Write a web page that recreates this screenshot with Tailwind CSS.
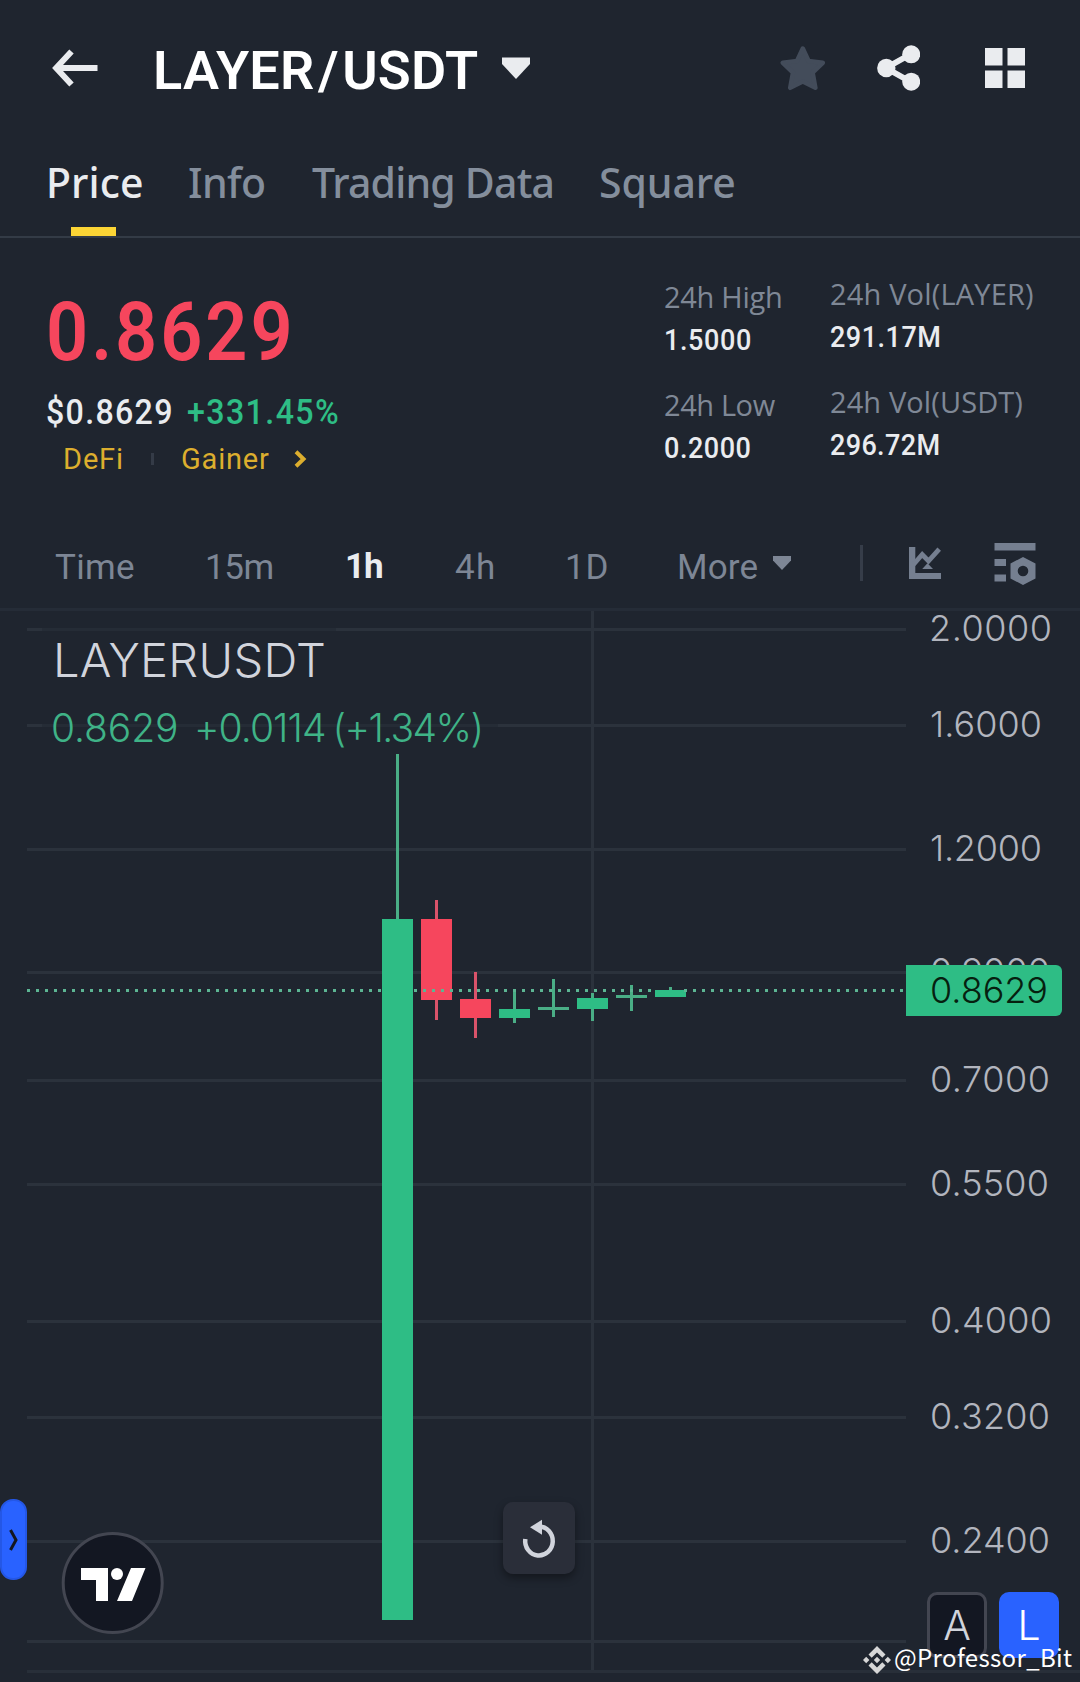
<!DOCTYPE html>
<html lang="en">
<head>
<meta charset="utf-8">
<title>LAYER/USDT</title>
<script src="https://cdn.jsdelivr.net/npm/@tailwindcss/browser@4"></script>
</head>
<body class="bg-[#1f252f]">
<div class="w-[1080px] h-[1682px] overflow-hidden bg-[#1f252f] font-['Roboto',sans-serif] whitespace-nowrap flex flex-col">

  <!-- Top bar -->
  <header class="h-[136px] shrink-0 flex items-center pl-[52px] text-[#eaecef]">
    <svg class="w-[46px] h-[38px] shrink-0" viewBox="0 0 46 38" fill="none" stroke="currentColor" stroke-width="6"><path d="M4 19H45.5M19.5 2.5L4.2 19L19.5 35.5"/></svg>
    <h1 class="ml-[55px] w-[349px] text-[54px] leading-[60px] pt-[5px] font-semibold tracking-[0.2px] text-white">LAYER<span class="mx-[3.5px]">/</span>USDT</h1>
    <svg class="w-[28px] h-[22px] shrink-0" viewBox="0 0 28 22" fill="currentColor"><path d="M0 0.5H28V7L14 22L0 7Z"/></svg>
    <svg class="ml-[250px] w-[46px] h-[46px] shrink-0 text-[#434c5a]" viewBox="0 0 46 46" fill="currentColor" stroke="currentColor" stroke-width="4.5" stroke-linejoin="round"><path d="M22.8 3.5L28.6 16L42.8 17.8L32.6 27.5L35.4 42.8L22.8 36.5L10.2 42.8L13 27.5L2.8 17.8L17 16Z"/></svg>
    <svg class="ml-[51px] w-[43px] h-[46px] shrink-0" viewBox="0 0 43 46" fill="currentColor"><path d="M34 9L9 23L34 37" fill="none" stroke="currentColor" stroke-width="6"/><circle cx="9.3" cy="23" r="9.2"/><circle cx="34.2" cy="9.3" r="9"/><circle cx="34.2" cy="36.7" r="9"/></svg>
    <svg class="ml-[65px] w-[40px] h-[40px] shrink-0" viewBox="0 0 40 40" fill="currentColor"><path d="M0 0H17.5V17.5H0ZM22.5 0H40V17.5H22.5ZM0 22.5H17.5V40H0ZM22.5 22.5H40V40H22.5Z"/></svg>
  </header>

  <!-- Tabs -->
  <nav class="h-[102px] shrink-0 flex border-b-2 border-[#333b46] pl-[46px] text-[41px] leading-[92px] font-medium text-[#848e9c] font-['Noto_Sans',sans-serif]">
    <div class="relative w-[142px] tracking-[0.11px] text-[#eaecef]">Price
      <span class="absolute left-[25px] top-[91px] w-[45px] h-[9px] bg-[#fcd535]"></span>
    </div>
    <div class="w-[124px] tracking-[-0.62px]">Info</div>
    <div class="w-[287px] tracking-[-0.8px]">Trading Data</div>
    <div class="tracking-[-0.1px]">Square</div>
  </nav>

  <!-- Price summary -->
  <section class="h-[288px] shrink-0 flex">
    <div class="w-[664px] pl-[46px] pt-[42px]">
      <div class="w-[300px] h-[104px] leading-[104px] text-[82px] font-semibold tracking-[3.3px] scale-x-90 origin-left text-[#f6465d]">0.8629</div>
      <div class="h-[56px] leading-[58px] text-[35px] font-medium flex">
        <span class="w-[141px] tracking-[1.4px] scale-x-92 origin-left text-[#eaecef]">$0.8629</span>
        <span class="tracking-[1.5px] scale-x-92 origin-left text-[#2ebd85]">+331.45%</span>
      </div>
      <div class="h-[38px] leading-[38px] text-[29px] text-[#dcae2e] flex items-center pl-[17px]">
        <span class="w-[88px] tracking-[0.85px]">DeFi</span>
        <span class="w-[3px] h-[12px] bg-[#343b47]"></span>
        <span class="ml-[27px] w-[113px] tracking-[0.81px]">Gainer</span>
        <svg class="w-[13px] h-[18px]" viewBox="0 0 13 18" fill="none" stroke="currentColor" stroke-width="4"><path d="M2 1.8L9.5 9L2 16.2"/></svg>
      </div>
    </div>
    <div class="w-[166px] pt-[38px]">
      <div class="h-[42px] leading-[42px] text-[29px] tracking-[-0.28px] text-[#7f8896] font-['Open_Sans',sans-serif]">24h High</div>
      <div class="h-[44px] leading-[44px] text-[30px] font-medium tracking-[0.7px] scale-x-90 origin-left text-[#eaecef]">1.5000</div>
      <div class="mt-[22px] h-[42px] leading-[42px] text-[29px] tracking-[-0.4px] text-[#7f8896] font-['Open_Sans',sans-serif]">24h Low</div>
      <div class="h-[44px] leading-[44px] text-[30px] font-medium tracking-[0.6px] scale-x-90 origin-left text-[#eaecef]">0.2000</div>
    </div>
    <div class="pt-[35px]">
      <div class="h-[42px] leading-[42px] text-[29px] tracking-[0.17px] text-[#7f8896] font-['Open_Sans',sans-serif]">24h Vol(LAYER)</div>
      <div class="h-[44px] leading-[44px] text-[30px] font-medium tracking-[0.57px] scale-x-90 origin-left text-[#eaecef]">291.17M</div>
      <div class="mt-[22px] h-[42px] leading-[42px] text-[29px] tracking-[0.1px] text-[#7f8896] font-['Open_Sans',sans-serif]">24h Vol(USDT)</div>
      <div class="h-[44px] leading-[44px] text-[30px] font-medium tracking-[0.4px] scale-x-90 origin-left text-[#eaecef]">296.72M</div>
    </div>
  </section>

  <!-- Interval bar -->
  <nav class="h-[85px] shrink-0 flex items-center border-b-[3px] border-[#252c37] pl-[55px] text-[35px] leading-[82px] text-[#7d8695]">
    <span class="w-[150px] pt-[2px] tracking-[0.3px]">Time</span>
    <span class="w-[140px] pt-[2px] tracking-[-0.4px]">15m</span>
    <span class="w-[110px] font-bold tracking-[-1px] text-[#eaecef]">1h</span>
    <span class="w-[110px] pt-[2px] tracking-[1.33px]">4h</span>
    <span class="w-[112px] pt-[2px] tracking-[0.83px]">1D</span>
    <span class="w-[96px] pt-[2px] tracking-[0.15px]">More</span>
    <svg class="w-[18px] h-[14px] -mt-[8px] shrink-0" viewBox="0 0 18 14" fill="currentColor"><path d="M0 0H18V4.5L9 14L0 4.5Z"/></svg>
    <span class="ml-[69px] w-[3px] h-[36px] -mt-[8px] bg-[#363d49]"></span>
    <svg class="ml-[46px] w-[32px] h-[32px] -mt-[8px] shrink-0 text-[#757f90]" viewBox="0 0 32 32"><path fill="currentColor" d="M0 0H6.3V26H32V32H0ZM13.2 22L18.5 16.2L24 22Z"/><path fill="none" stroke="currentColor" stroke-width="4.8" d="M4.5 17.5L13.2 7.5L19.5 14L30.2 2.2"/></svg>
    <svg class="ml-[53px] w-[42px] h-[42px] -mt-[6px] shrink-0 text-[#757f90]" viewBox="0 0 42 42" fill="currentColor"><path d="M0.5 0H41.5V7.5H0.5ZM0.5 16H12V23H0.5ZM0.5 31.5H12V38.5H0.5Z"/><path fill-rule="evenodd" d="M29 14L41.5 20.5V35.5L29 42L16.5 35.5V20.5ZM29 22.7A5.3 5.3 0 1 0 29 33.3A5.3 5.3 0 1 0 29 22.7Z"/></svg>
  </nav>

  <!-- Chart -->
  <main class="relative h-[1071px] shrink-0 font-['Inter',sans-serif] font-light">
    <svg class="block w-[1080px] h-[1071px]" viewBox="0 611 1080 1071">
      <path fill="#2b323c" d="M591 611h3v1060h-3zM27 628h879v3H27zM27 724h879v3H27zM27 848h879v3H27zM27 971h879v3H27zM27 1079h879v3H27zM27 1183h879v3H27zM27 1320h879v3H27zM27 1416h879v3H27zM27 1540h879v3H27zM27 1640h879v3H27z"/>
      <path fill="#282f39" d="M27 1670h1053v3H27z"/>
      <!-- legend backdrop -->
      <path fill="#1f252f" fill-opacity=".5" d="M42 620h294v80H42zM42 700h456v54H42z"/>
      <!-- wicks -->
      <path fill="#4aae86" d="M396 754h3v165h-3zM513 990h3v33h-3zM552 979h3v38h-3zM591 993h3v28h-3zM630 985h3v26h-3zM669 987h3v8h-3zM538 1007h31v3h-31zM616 995h31v3h-31z"/>
      <path fill="#d9536a" d="M435 900h3v120h-3zM474 972h3v66h-3z"/>
      <!-- bodies -->
      <path fill="#2ebd85" d="M382 919h31v701h-31zM499 1009h31v9h-31zM577 998h31v11h-31zM655 990h31v7h-31z"/>
      <path fill="#f6465d" d="M421 919h31v81h-31zM460 999h31v19h-31z"/>
      <path stroke="#5cb593" stroke-width="3" stroke-dasharray="3 6" d="M27 990.5H382M414 990.5H655M684 990.5H906"/>
      <!-- price scale -->
      <g fill="#b2b5be" font-size="36">
        <text x="929" y="641" textLength="123">2.0000</text>
        <text x="930" y="737" textLength="112">1.6000</text>
        <text x="930" y="861" textLength="112">1.2000</text>
        <text x="930" y="984" textLength="120">0.9000</text>
        <text x="930" y="1092" textLength="120">0.7000</text>
        <text x="930" y="1196" textLength="119">0.5500</text>
        <text x="930" y="1333" textLength="122">0.4000</text>
        <text x="930" y="1429" textLength="120">0.3200</text>
        <text x="930" y="1553" textLength="120">0.2400</text>
      </g>
      <path fill="#2ebd85" d="M906 965h150a6 6 0 0 1 6 6v39a6 6 0 0 1-6 6H906z"/>
      <text x="930" y="1003" font-size="36" fill="#06200f" textLength="118">0.8629</text>
      <!-- TradingView badge -->
      <circle cx="112.700" cy="1583" r="49.500" fill="#131722" stroke="#434651" stroke-width="3"/>
      <path fill="#fff" d="M81 1568H108V1601H96V1580H81ZM131 1568H145.500L132 1601H117Z"/>
      <circle cx="117" cy="1574" r="6" fill="#fff"/>
    </svg>

    <div class="absolute left-[53px] top-[19px] text-[47px] leading-[60px] tracking-[0.34px] text-[#d1d4dc]">LAYERUSDT</div>
    <div class="absolute left-[51px] top-[92px] flex text-[39px] leading-[50px] text-[#3fb387]">
      <span class="w-[143px] tracking-[-0.09px]">0.8629</span>
      <span class="tracking-[-0.9px]">+0.0114</span>
      <span class="ml-[7px] tracking-[-1.6px]">(+1.34%)</span>
    </div>

    <button class="absolute left-0 top-[888px] w-[27px] h-[81px] rounded-[13px] border-[2px] border-[#2457e6] bg-[#2962ff] flex items-center justify-center">
      <svg class="w-[9px] h-[22px]" viewBox="0 0 9 22" fill="none" stroke="#131722" stroke-width="3"><path d="M1.500 1L7 11L1.500 21"/></svg>
    </button>

    <button class="absolute left-[503px] top-[891px] w-[72px] h-[72px] rounded-[10px] bg-[#2a2e39] shadow-[0_4px_8px_rgba(0,0,0,0.4)]">
      <svg class="w-[72px] h-[72px]" viewBox="503 1502 72 72"><path fill="none" stroke="#d1d4dc" stroke-width="4.500" d="M525.300 1539A13.800 14.500 0 1 0 539 1526.500"/><path fill="#d1d4dc" d="M530 1527.300L542 1519.700V1534.700Z"/></svg>
    </button>

    <button class="absolute left-[927px] top-[981px] w-[60px] h-[66px] rounded-[10px] border-[3px] border-[#434651] bg-[#131722] text-[41px] leading-[60px] text-[#d1d4dc]">A</button>
    <button class="absolute left-[999px] top-[981px] w-[60px] h-[66px] rounded-[10px] bg-[#2962ff] text-[41px] leading-[66px] text-white">L</button>

    <div class="absolute left-[863px] top-[1026px] flex items-center text-white">
      <svg class="w-[28px] h-[28px] mt-[6px]" viewBox="0 0 28 28" fill="#d6d6d6"><path d="M14 0L22.500 8.500L19.300 11.700L14 6.400L8.700 11.700L5.500 8.500ZM14 28L22.500 19.500L19.300 16.300L14 21.600L8.700 16.300L5.500 19.500ZM14 10.800L17.200 14L14 17.200L10.800 14ZM3.200 10.800L6.400 14L3.200 17.200L0 14ZM24.800 10.800L28 14L24.800 17.200L21.600 14Z"/></svg>
      <span class="ml-[3px] text-[24px] leading-[40px] font-normal tracking-[0.35px] font-['Noto_Sans_CJK_SC',sans-serif]">@Professor_Bit</span>
    </div>
  </main>
</div>
</body>
</html>
